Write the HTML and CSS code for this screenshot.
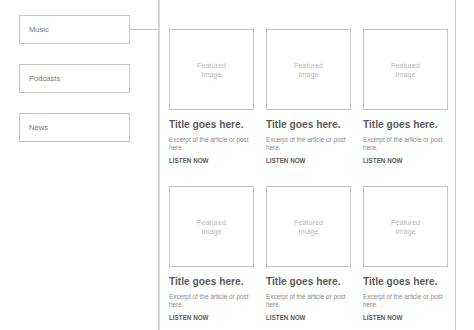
FILE: index.html
```html
<!DOCTYPE html>
<html lang="en">
<head>
    <meta charset="UTF-8">
    <meta name="viewport" content="width=device-width, initial-scale=1.0">
    <title>Podcast Wireframe</title>
    <link rel="stylesheet" href="styles.css">
</head>
<body>
    <div class="page">
        <nav class="sidebar">
            <a class="nav-item active" href="#">Music</a>
            <a class="nav-item" href="#">Podcasts</a>
            <a class="nav-item" href="#">News</a>
        </nav>

        <main class="content">
            <div class="grid">
                <div class="card">
                    <div class="thumb">Featured<br>Image</div>
                    <h2 class="title">Title goes here.</h2>
                    <p class="excerpt">Excerpt of the article or post here.</p>
                    <a class="listen" href="#">LISTEN NOW</a>
                </div>
                <div class="card">
                    <div class="thumb">Featured<br>Image</div>
                    <h2 class="title">Title goes here.</h2>
                    <p class="excerpt">Excerpt of the article or post here.</p>
                    <a class="listen" href="#">LISTEN NOW</a>
                </div>
                <div class="card">
                    <div class="thumb">Featured<br>Image</div>
                    <h2 class="title">Title goes here.</h2>
                    <p class="excerpt">Excerpt of the article or post here.</p>
                    <a class="listen" href="#">LISTEN NOW</a>
                </div>
                <div class="card">
                    <div class="thumb">Featured<br>Image</div>
                    <h2 class="title">Title goes here.</h2>
                    <p class="excerpt">Excerpt of the article or post here.</p>
                    <a class="listen" href="#">LISTEN NOW</a>
                </div>
                <div class="card">
                    <div class="thumb">Featured<br>Image</div>
                    <h2 class="title">Title goes here.</h2>
                    <p class="excerpt">Excerpt of the article or post here.</p>
                    <a class="listen" href="#">LISTEN NOW</a>
                </div>
                <div class="card">
                    <div class="thumb">Featured<br>Image</div>
                    <h2 class="title">Title goes here.</h2>
                    <p class="excerpt">Excerpt of the article or post here.</p>
                    <a class="listen" href="#">LISTEN NOW</a>
                </div>
            </div>
        </main>
    </div>
</body>
</html>
```

FILE: styles.css
```css
body {
    margin: 0;
    font-family: "Liberation Sans", Arial, sans-serif;
    background: #fff;
}
.page {
    display: flex;
    height: 330px;
}
.sidebar {
    width: 139px;
    padding: 15px 0 0 19px;
    display: flex;
    flex-direction: column;
    gap: 20px;
}
.nav-item {
    position: relative;
    display: flex;
    align-items: center;
    box-sizing: border-box;
    width: 111px;
    height: 29px;
    padding-left: 9px;
    border: 1px solid #c4c4c4;
    color: #7a7a7a;
    font-size: 7.6px;
    text-decoration: none;
}
/* connector from the active item to the content panel */
.nav-item.active::after {
    content: "";
    position: absolute;
    left: 110px;
    top: 13px;
    width: 29px;
    height: 1px;
    background: #c4c4c4;
}
.content {
    box-sizing: border-box;
    width: 298px;
    border-left: 2px solid #d6d6d6;
    border-right: 1px solid #c8c8c8;
    padding: 29px 0 0 9px;
}
.grid {
    display: grid;
    grid-template-columns: repeat(3, 85px);
    column-gap: 12px;
    row-gap: 21px;
}
.thumb {
    box-sizing: border-box;
    height: 81px;
    border: 1px solid #c4c4c4;
    display: flex;
    align-items: center;
    justify-content: center;
    text-align: center;
    color: #b8b8b8;
    font-size: 7.2px;
    line-height: 9px;
}
.title {
    margin: 9px 0 0;
    font-size: 10.2px;
    line-height: 12px;
    font-weight: bold;
    color: #5a5a5a;
    white-space: nowrap;
}
.excerpt {
    margin: 5px 0 0;
    font-size: 6.4px;
    line-height: 8px;
    color: #8a8a8a;
}
.listen {
    display: block;
    margin-top: 5px;
    font-size: 6.3px;
    line-height: 8px;
    font-weight: bold;
    color: #5a5a5a;
    text-decoration: none;
}
```
